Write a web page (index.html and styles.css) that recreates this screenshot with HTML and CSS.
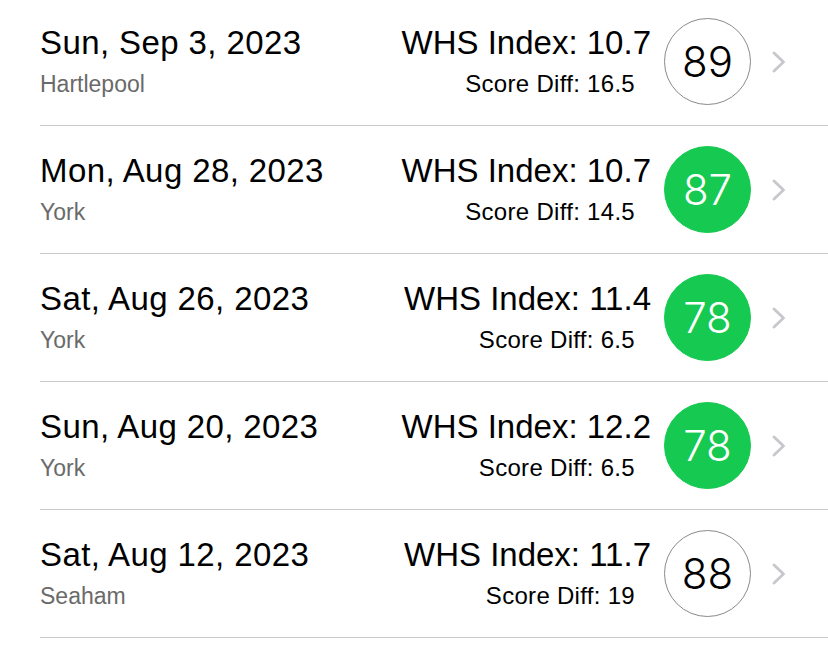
FILE: index.html
```html
<!DOCTYPE html>
<html lang="en">
<head>
    <meta charset="UTF-8">
    <title>Rounds</title>
    <link rel="stylesheet" href="styles.css">
</head>
<body>
    <div class="rounds">
        <div class="round">
            <div class="info">
                <div class="date">Sun, Sep 3, 2023</div>
                <div class="course">Hartlepool</div>
            </div>
            <div class="stats">
                <div class="index">WHS Index: 10.7</div>
                <div class="diff">Score Diff: 16.5</div>
            </div>
            <div class="score">89</div>
            <svg class="chevron" width="14" height="22" viewBox="0 0 14 22"><polyline points="2,2 11.5,11 2,20" /></svg>
        </div>

        <div class="round">
            <div class="info">
                <div class="date">Mon, Aug 28, 2023</div>
                <div class="course">York</div>
            </div>
            <div class="stats">
                <div class="index">WHS Index: 10.7</div>
                <div class="diff">Score Diff: 14.5</div>
            </div>
            <div class="score good">87</div>
            <svg class="chevron" width="14" height="22" viewBox="0 0 14 22"><polyline points="2,2 11.5,11 2,20" /></svg>
        </div>

        <div class="round">
            <div class="info">
                <div class="date">Sat, Aug 26, 2023</div>
                <div class="course">York</div>
            </div>
            <div class="stats">
                <div class="index">WHS Index: 11.4</div>
                <div class="diff">Score Diff: 6.5</div>
            </div>
            <div class="score good">78</div>
            <svg class="chevron" width="14" height="22" viewBox="0 0 14 22"><polyline points="2,2 11.5,11 2,20" /></svg>
        </div>

        <div class="round">
            <div class="info">
                <div class="date">Sun, Aug 20, 2023</div>
                <div class="course">York</div>
            </div>
            <div class="stats">
                <div class="index">WHS Index: 12.2</div>
                <div class="diff">Score Diff: 6.5</div>
            </div>
            <div class="score good">78</div>
            <svg class="chevron" width="14" height="22" viewBox="0 0 14 22"><polyline points="2,2 11.5,11 2,20" /></svg>
        </div>

        <div class="round">
            <div class="info">
                <div class="date">Sat, Aug 12, 2023</div>
                <div class="course">Seaham</div>
            </div>
            <div class="stats">
                <div class="index">WHS Index: 11.7</div>
                <div class="diff">Score Diff: 19</div>
            </div>
            <div class="score">88</div>
            <svg class="chevron" width="14" height="22" viewBox="0 0 14 22"><polyline points="2,2 11.5,11 2,20" /></svg>
        </div>
    </div>
</body>
</html>
```

FILE: styles.css
```css
body {
    font-family: "Liberation Sans", Arial, sans-serif;
    background-color: #ffffff;
    color: #000000;
    margin: 0;
    padding: 0;
    overflow: hidden;
}

.rounds {
    margin-top: -2px;
    margin-left: 40px;
}

.round {
    display: flex;
    align-items: flex-start;
    height: 127px;
    border-bottom: 1px solid #c8c8cc;
}

.info {
    padding-top: 26px;
}

.date, .index {
    font-size: 33px;
    line-height: 38px;
}

.date {
    letter-spacing: 0.4px;
}

.course, .diff {
    font-size: 23px;
    line-height: 28px;
    margin-top: 8px;
}

.course {
    color: #6a6a6a;
}

.stats {
    margin-left: auto;
    padding-top: 26px;
    text-align: right;
}

.diff {
    font-size: 24px;
    letter-spacing: 0.3px;
    padding-right: 16px;
}

.score {
    align-self: center;
    width: 85px;
    height: 85px;
    margin-left: 13px;
    border: 1.5px solid #8a8a8a;
    border-radius: 50%;
    display: flex;
    align-items: center;
    justify-content: center;
    font-family: Inter, "Liberation Sans", sans-serif;
    font-weight: 300;
    font-size: 42px;
}

.score.good {
    background-color: #16c950;
    border-color: #16c950;
    color: #ffffff;
}

.chevron {
    align-self: center;
    margin-left: 21px;
    margin-right: 42px;
}

.chevron polyline {
    fill: none;
    stroke: #c7c7cc;
    stroke-width: 2.8;
    stroke-linecap: round;
    stroke-linejoin: round;
}
```
